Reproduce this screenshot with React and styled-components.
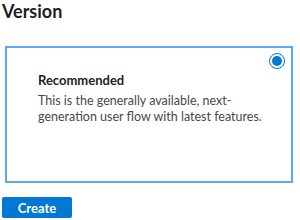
import React from "react";
import styled, { createGlobalStyle } from "styled-components";

const GlobalStyle = createGlobalStyle`
    html, body {
        margin: 0;
        padding: 0;
        background: #ffffff;
    }
    body {
        font-family: "Lato", "Open Sans", sans-serif;
        color: #323130;
    }
`;

const Page = styled.div`
    width: 300px;
    height: 220px;
    padding: 0 2px;
    box-sizing: border-box;
    display: flex;
    flex-direction: column;
`;

const Title = styled.h2`
    margin: 0;
    font-size: 18px;
    font-weight: 700;
    line-height: 22px;
    color: #201f1e;
`;

const Card = styled.label`
    position: relative;
    margin: 24px 5px 0 3px;
    height: 137px;
    box-sizing: border-box;
    border: 2px solid #5ea9ec;
    padding: 24px 14px 0 31px;
    display: flex;
    flex-direction: column;
    cursor: pointer;
`;

const Radio = styled.span`
    position: absolute;
    top: 5px;
    right: 6px;
    width: 16px;
    height: 16px;
    box-sizing: border-box;
    border-radius: 50%;
    border: 1.5px solid #0078d4;
    display: flex;
    align-items: center;
    justify-content: center;
    &::after {
        content: "";
        width: 10px;
        height: 10px;
        border-radius: 50%;
        background: #0078d4;
    }
`;

const CardTitle = styled.div`
    font-size: 13px;
    font-weight: 700;
    line-height: 16px;
    color: #201f1e;
`;

const CardText = styled.div`
    margin-top: 5px;
    font-size: 12.5px;
    line-height: 16px;
    color: #494847;
`;

const Button = styled.button`
    margin-top: 14px;
    width: 70px;
    height: 21px;
    border: none;
    border-radius: 2px;
    background: #0078d4;
    color: #ffffff;
    font-family: inherit;
    font-size: 13px;
    font-weight: 700;
    padding: 0;
    cursor: pointer;
`;

const App = () => {
    return (
        <Page>
            <GlobalStyle />
            <Title>Version</Title>
            <Card>
                <Radio />
                <CardTitle>Recommended</CardTitle>
                <CardText>
                    This is the generally available, next-generation user flow with latest features.
                </CardText>
            </Card>
            <Button>Create</Button>
        </Page>
    );
};

export default App;
